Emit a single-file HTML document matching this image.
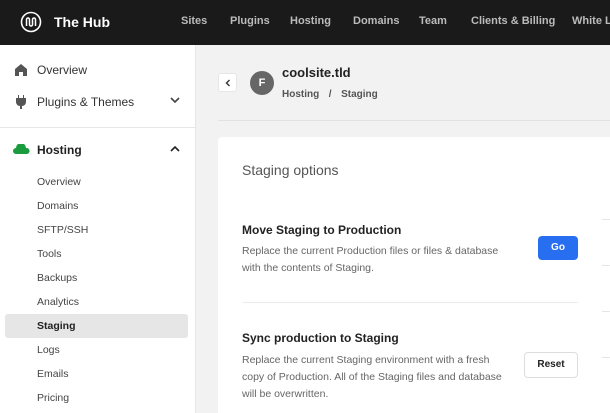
<!DOCTYPE html>
<html><head><style>
*{margin:0;padding:0;box-sizing:border-box}
html,body{width:610px;height:413px;overflow:hidden}
body{background:#f2f2f2;font-family:"Liberation Sans",Arial,sans-serif;position:relative}
.top{position:absolute;left:0;top:0;width:610px;height:45px;background:#1a1a1a}
.top .t{position:absolute;color:#fff;font-weight:bold;font-size:14px;top:14px;left:54px}
.nav{position:absolute;top:15px;color:#bbb;font-size:11px;font-weight:bold;white-space:nowrap}
.side{position:absolute;left:0;top:45px;width:196px;height:368px;background:#fff;border-right:1px solid #e6e6e6}
.it{position:absolute;left:37px;font-size:12px;color:#333}
.sub{position:absolute;left:37px;font-size:10.5px;color:#444}
.card{position:absolute;left:218px;top:137px;width:400px;height:290px;background:#fff;border-radius:4px}
.p{font-size:10.5px;color:#666;line-height:17px;position:absolute;left:242px;white-space:nowrap}
.h{position:absolute;left:242px;font-size:12px;font-weight:bold;color:#222}
</style></head><body>
<div class="top">
<svg style="position:absolute;left:20px;top:11px" width="22" height="22" viewBox="0 0 22 22"><circle cx="11" cy="11" r="9.5" fill="none" stroke="#fff" stroke-width="1.6"/><path d="M6.5 15V8.5a1.5 1.5 0 0 1 3 0V13.5a1.5 1.5 0 0 0 3 0V8.5a1.5 1.5 0 0 1 3 0V15" fill="none" stroke="#fff" stroke-width="1.5"/></svg>
<div class="t">The Hub</div>
<div class="nav" style="left:181px">Sites</div>
<div class="nav" style="left:230px">Plugins</div>
<div class="nav" style="left:290px">Hosting</div>
<div class="nav" style="left:353px">Domains</div>
<div class="nav" style="left:419px">Team</div>
<div class="nav" style="left:471px">Clients &amp; Billing</div>
<div class="nav" style="left:572px">White Label</div>
</div>
<div class="side">
<svg style="position:absolute;left:15px;top:19px" width="12" height="12" viewBox="0 0 12 12"><path d="M6 0L0 5v7h4V8h4v4h4V5z" fill="#555"/></svg>
<div class="it" style="top:18px">Overview</div>
<svg style="position:absolute;left:16px;top:50px" width="10" height="14" viewBox="0 0 10 14"><path d="M2 0h1v3h4V0h1v3h2v4a4 4 0 0 1-4 4v3H4v-3a4 4 0 0 1-4-4V3h2z" fill="#555"/></svg>
<div class="it" style="top:50px">Plugins &amp; Themes</div>
<svg style="position:absolute;left:170px;top:52px" width="10" height="7"><path d="M1 1l4 4 4-4" fill="none" stroke="#444" stroke-width="1.6"/></svg>
<div style="position:absolute;left:0;top:82px;width:196px;height:1px;background:#e6e6e6"></div>
<svg style="position:absolute;left:13px;top:99px" width="17" height="10" viewBox="0 0 17 10"><path d="M3 10a3 3 0 0 1 0-6 5 5 0 0 1 10 0 3 3 0 0 1 1 6z" fill="#1a9c3e"/></svg>
<div class="it" style="top:98px;font-weight:bold;color:#222">Hosting</div>
<svg style="position:absolute;left:170px;top:100px" width="10" height="7"><path d="M1 6l4-4 4 4" fill="none" stroke="#222" stroke-width="1.6"/></svg>
<div class="sub" style="top:131px">Overview</div>
<div class="sub" style="top:155px">Domains</div>
<div class="sub" style="top:179px">SFTP/SSH</div>
<div class="sub" style="top:203px">Tools</div>
<div class="sub" style="top:227px">Backups</div>
<div class="sub" style="top:251px">Analytics</div>
<div style="position:absolute;left:5px;top:269px;width:183px;height:24px;background:#e6e6e6;border-radius:3px"></div>
<div class="sub" style="top:275px;color:#222;font-weight:bold">Staging</div>
<div class="sub" style="top:299px">Logs</div>
<div class="sub" style="top:323px">Emails</div>
<div class="sub" style="top:347px">Pricing</div>
</div>
<div style="position:absolute;left:218px;top:73px;width:19px;height:19px;background:#fff;border-radius:3px;border:1px solid #e6e6e6"></div>
<svg style="position:absolute;left:225px;top:79px" width="6" height="8"><path d="M4.5 1L1.5 4l3 3" fill="none" stroke="#333" stroke-width="1.4"/></svg>
<div style="position:absolute;left:250px;top:71px;width:24px;height:24px;border-radius:50%;background:#666;color:#fff;font-size:11px;font-weight:bold;text-align:center;line-height:24px">F</div>
<div style="position:absolute;left:282px;top:65px;font-size:13px;font-weight:bold;color:#222">coolsite.tld</div>
<div style="position:absolute;left:282px;top:89px;font-size:10px;font-weight:bold;color:#555;word-spacing:2px">Hosting &nbsp;/ &nbsp;Staging</div>
<div style="position:absolute;left:218px;top:120px;width:392px;height:1px;background:#e2e2e2"></div>
<div class="card"></div>
<div style="position:absolute;left:242px;top:162px;font-size:14px;color:#555">Staging options</div>
<div class="h" style="top:223px">Move Staging to Production</div>
<div class="p" style="top:243px">Replace the current Production files or files &amp; database<br>with the contents of Staging.</div>
<div style="position:absolute;left:538px;top:236px;width:40px;height:24px;background:#286ef1;border-radius:4px;color:#fff;font-size:10px;font-weight:bold;text-align:center;line-height:24px">Go</div>
<div style="position:absolute;left:242px;top:302px;width:336px;height:1px;background:#ececec"></div>
<div class="h" style="top:331px">Sync production to Staging</div>
<div class="p" style="top:352px">Replace the current Staging environment with a fresh<br>copy of Production. All of the Staging files and database<br>will be overwritten.</div>
<div style="position:absolute;left:524px;top:352px;width:54px;height:26px;border:1px solid #ddd;border-radius:4px;color:#222;font-size:10px;font-weight:bold;text-align:center;line-height:24px">Reset</div>
<div style="position:absolute;left:602px;top:219px;width:8px;height:1px;background:#e6e6e6"></div>
<div style="position:absolute;left:602px;top:265px;width:8px;height:1px;background:#e6e6e6"></div>
<div style="position:absolute;left:602px;top:311px;width:8px;height:1px;background:#e6e6e6"></div>
<div style="position:absolute;left:602px;top:357px;width:8px;height:1px;background:#e6e6e6"></div>
</body></html>
